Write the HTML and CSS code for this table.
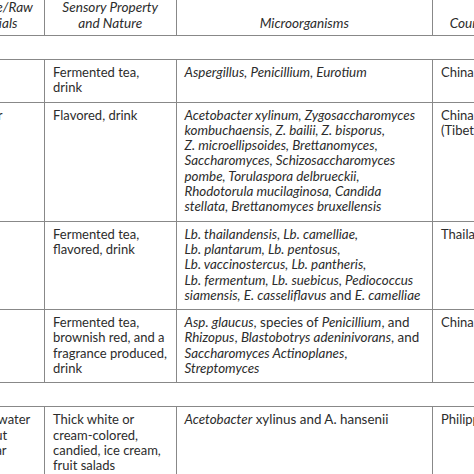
FILE: index.html
```html
<!DOCTYPE html>
<html>
<head>
<meta charset="utf-8">
<link rel="stylesheet" href="styles.css">
</head>
<body>
<div class="page">
<table class="tbl">
  <colgroup>
    <col class="c1"><col class="c2"><col class="c3"><col class="c4">
  </colgroup>
  <thead>
    <tr>
      <th class="h">Substrate/Raw<br>Materials</th>
      <th class="h">Sensory Property<br>and Nature</th>
      <th class="h">Microorganisms</th>
      <th class="h">Country</th>
    </tr>
  </thead>
  <tbody>
    <tr class="sec"><td colspan="4"></td></tr>
    <tr>
      <td></td>
      <td>Fermented tea,<br>drink</td>
      <td class="micro"><i>Aspergillus, Penicillium, Eurotium</i></td>
      <td>China</td>
    </tr>
    <tr>
      <td>Tea, sugar</td>
      <td>Flavored, drink</td>
      <td class="micro"><i>Acetobacter xylinum, Zygosaccharomyces<br>kombuchaensis, Z. bailii, Z. bisporus,<br>Z. microellipsoides, Brettanomyces,<br>Saccharomyces, Schizosaccharomyces<br>pombe, Torulaspora delbrueckii,<br>Rhodotorula mucilaginosa, Candida<br>stellata, Brettanomyces bruxellensis</i></td>
      <td>China<br>(Tibet)</td>
    </tr>
    <tr>
      <td></td>
      <td>Fermented tea,<br>flavored, drink</td>
      <td class="micro"><i>Lb. thailandensis, Lb. camelliae,<br>Lb. plantarum, Lb. pentosus,<br>Lb. vaccinostercus, Lb. pantheris,<br>Lb. fermentum, Lb. suebicus, Pediococcus<br>siamensis, E. casseliflavus</i> and <i>E. camelliae</i></td>
      <td>Thailand</td>
    </tr>
    <tr>
      <td></td>
      <td>Fermented tea,<br>brownish red, and a<br>fragrance produced,<br>drink</td>
      <td class="micro"><i>Asp. glaucus</i>, species of <i>Penicillium</i>, and<br><i>Rhizopus</i>, <i>Blastobotrys adeninivorans</i>, and<br><i>Saccharomyces Actinoplanes</i>,<br><i>Streptomyces</i></td>
      <td>China</td>
    </tr>
    <tr class="sec"><td colspan="4"></td></tr>
    <tr>
      <td>Coconut water<br>or coconut<br>milk, sugar</td>
      <td>Thick white or<br>cream-colored,<br>candied, ice cream,<br>fruit salads</td>
      <td class="micro"><i>Acetobacter</i> xylinus and A. hansenii</td>
      <td>Philippines</td>
    </tr>
  </tbody>
</table>
</div>
</body>
</html>
```

FILE: styles.css
```css
html, body {
  margin: 0;
  padding: 0;
  background: #ffffff;
  overflow: hidden;
}
body {
  width: 474px;
  height: 474px;
}
.page {
  margin-left: -63px;
  margin-top: -6px;
}
.tbl {
  border-collapse: collapse;
  table-layout: fixed;
  width: 575px;
  font-family: Lato, "Open Sans", sans-serif;
  font-size: 13px;
  line-height: 15.3px;
  color: #2c2c2c;
}
.c1 { width: 107px; }
.c2 { width: 131.5px; }
.c3 { width: 256.5px; }
.c4 { width: 80px; }
.tbl th {
  font-weight: normal;
  font-style: italic;
  font-size: 13.6px;
  text-align: center;
  vertical-align: bottom;
  padding: 5px 8px 4px;
  line-height: 16px;
  border-left: 1px solid #888;
  border-right: 1px solid #888;
  border-bottom: 1px solid #888;
  white-space: nowrap;
}
.tbl td {
  vertical-align: top;
  text-align: left;
  padding: 5px 9px 6px 8px;
  border: 1px solid #888;
  white-space: nowrap;
}
.tbl td.micro {
  font-size: 13.4px;
}
.tbl tr.sec td {
  height: 12px;
  padding: 5px 9px 6px;
  border-left: none;
  border-right: none;
}
```
